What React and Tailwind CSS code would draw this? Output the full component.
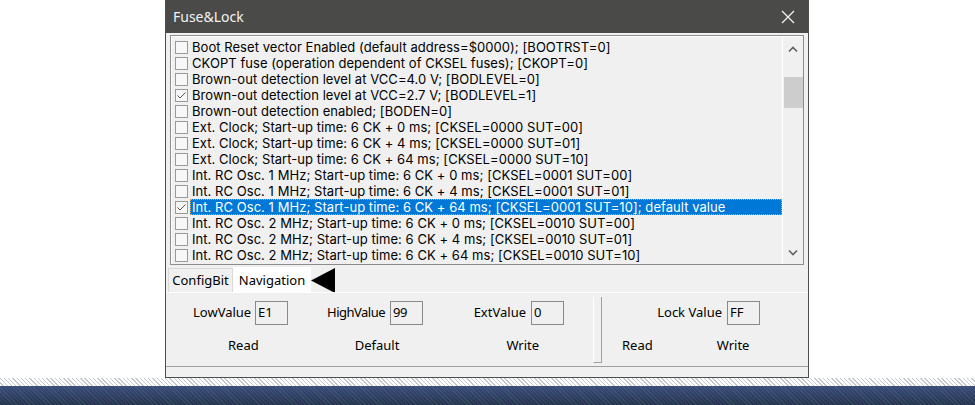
import React from "react"

const rows = [
 { t: "Boot Reset vector Enabled (default address=$0000); [BOOTRST=0]" },
 { t: "CKOPT fuse (operation dependent of CKSEL fuses); [CKOPT=0]" },
 { t: "Brown-out detection level at VCC=4.0 V; [BODLEVEL=0]" },
 { t: "Brown-out detection level at VCC=2.7 V; [BODLEVEL=1]", on: true },
 { t: "Brown-out detection enabled; [BODEN=0]" },
 { t: "Ext. Clock; Start-up time: 6 CK + 0 ms; [CKSEL=0000 SUT=00]" },
 { t: "Ext. Clock; Start-up time: 6 CK + 4 ms; [CKSEL=0000 SUT=01]" },
 { t: "Ext. Clock; Start-up time: 6 CK + 64 ms; [CKSEL=0000 SUT=10]" },
 { t: "Int. RC Osc. 1 MHz; Start-up time: 6 CK + 0 ms; [CKSEL=0001 SUT=00]" },
 { t: "Int. RC Osc. 1 MHz; Start-up time: 6 CK + 4 ms; [CKSEL=0001 SUT=01]" },
 { t: "Int. RC Osc. 1 MHz; Start-up time: 6 CK + 64 ms; [CKSEL=0001 SUT=10]; default value", on: true, sel: true },
 { t: "Int. RC Osc. 2 MHz; Start-up time: 6 CK + 0 ms; [CKSEL=0010 SUT=00]" },
 { t: "Int. RC Osc. 2 MHz; Start-up time: 6 CK + 4 ms; [CKSEL=0010 SUT=01]" },
 { t: "Int. RC Osc. 2 MHz; Start-up time: 6 CK + 64 ms; [CKSEL=0010 SUT=10]" },
]

function Check({ on }) {
 return (
  <div className="w-[13px] h-[13px] shrink-0 border border-[#9a9a9a] bg-[#f7f7f7] flex items-center justify-center">
   {on && (
    <svg width="11" height="11" viewBox="0 0 11 11">
     <polyline points="1.5,5.5 4,8 9.5,2.5" fill="none" stroke="#555" strokeWidth="1" />
    </svg>
   )}
  </div>
 )
}

function Field({ label, value, w }) {
 return (
  <div className="flex items-center">
   <span className={w + " text-right whitespace-nowrap"}>{label}</span>
   <div className="ml-[5px] w-[33px] h-[24px] border border-[#8a8a8a] bg-[#f0f0f0] pl-[2px] leading-[21px]">
    {value}
   </div>
  </div>
 )
}

export default function App() {
 return (
  <div className="w-[975px] h-[405px] bg-white flex flex-col overflow-hidden font-['Noto_Sans',sans-serif] text-[13px] text-black">

   {/* window */}
   <div className="h-[378px] pl-[165px] shrink-0">
    <div className="w-[644px] h-[378px] border-x border-b border-[#4e4e4e] bg-[#f0f0f0] flex flex-col">

     {/* TITLE BAR */}
     <div className="h-[33px] bg-[#4a4a48] flex items-center justify-between pl-[7px] pr-[13px] shrink-0">
      <span className="text-[14px] text-[#f2f2f2]">Fuse&amp;Lock</span>
      <svg width="14" height="14" viewBox="0 0 14 14">
       <path d="M1 1 L13 13 M13 1 L1 13" stroke="#f2f2f2" strokeWidth="1.3" />
      </svg>
     </div>

     {/* LIST */}
     <div className="mt-[2px] mx-[4px] h-[230px] border border-[#8c8c8c] shadow-[inset_1px_1px_0_#ffffff] bg-[#f0f0f0] flex shrink-0">
      <div className="flex-1 pt-[3px] pl-[4px] overflow-hidden font-['Inter',sans-serif] tracking-[0.05px]">
       {rows.map((r, i) => (
        <div key={i} className="h-[16px] flex items-center">
         <Check on={r.on} />
         <div
          className={
           r.sel
            ? "ml-[2px] h-[16px] flex-1 bg-[#0078d7] text-white pl-[2px] leading-[16px] whitespace-nowrap outline outline-1 outline-dotted outline-[#e8a040] -outline-offset-1"
            : "ml-[2px] pl-[2px] leading-[16px] whitespace-nowrap"
          }
         >
          {r.t}
         </div>
        </div>
       ))}
      </div>

      {/* scrollbar */}
      <div className="w-[21px] border-l border-white flex flex-col items-center">
       <div className="h-[26px] flex items-center justify-center">
        <svg width="10" height="7" viewBox="0 0 10 7">
         <polyline points="1,5.5 5,1.5 9,5.5" fill="none" stroke="#606060" strokeWidth="1.6" />
        </svg>
       </div>
       <div className="mt-[15px] w-[19px] h-[31px] bg-[#cdcdcd]" />
       <div className="flex-1" />
       <div className="h-[24px] flex items-center justify-center">
        <svg width="10" height="7" viewBox="0 0 10 7">
         <polyline points="1,1.5 5,5.5 9,1.5" fill="none" stroke="#606060" strokeWidth="1.6" />
        </svg>
       </div>
      </div>
     </div>

     {/* TABS */}
     <div className="h-[27px] flex items-end pl-[2px] shrink-0">
      <div className="h-[24px] w-[65px] border border-b-0 border-[#d9d9d9] bg-[#f0f0f0] flex items-center justify-center">
       ConfigBit
      </div>
      <div className="h-[25px] w-[78px] bg-white flex items-center justify-center pt-[2px]">
       Navigation
      </div>
      <svg width="25" height="25" viewBox="0 0 25 25" className="self-end mb-[-1px]">
       <polygon points="0,12.5 24,0 24,25" fill="#000" />
      </svg>
     </div>

     {/* PANEL */}
     <div className="flex-1 flex flex-col border-t border-white">
      <div className="flex-1 flex">

       {/* fuses */}
       <div className="w-[427px] flex flex-col pt-[8px]">
        <div className="flex items-center pl-[27px]">
         <Field label="LowValue" value="E1" w="w-[57px]" />
         <div className="ml-[39px] tracking-[-0.5px]"><Field label="HighValue" value="99" w="w-[58px]" /></div>
         <div className="ml-[50px]"><Field label="ExtValue" value="0" w="w-[53px]" /></div>
        </div>
        <div className="flex items-center h-[24px] mt-[9px]">
         <span className="ml-[62px]">Read</span>
         <span className="ml-[96px]">Default</span>
         <span className="ml-[107px]">Write</span>
        </div>
       </div>

       {/* splitter */}
       <div className="mt-[4px] mb-[3px] w-[9px] border-l border-white border-r border-b border-r-[#a0a0a0] border-b-[#a0a0a0]" />

       {/* lock */}
       <div className="flex-1 flex flex-col pt-[8px]">
        <div className="flex items-center pl-[54px]">
         <Field label="Lock Value" value="FF" w="w-[66px]" />
        </div>
        <div className="flex items-center h-[24px] mt-[9px]">
         <span className="ml-[20px]">Read</span>
         <span className="ml-[64px]">Write</span>
        </div>
       </div>
      </div>

      {/* status */}
      <div className="h-[11px] border-t border-[#a0a0a0]" />
     </div>
    </div>
   </div>

   {/* desktop edge */}
   <div className="h-[8px] shrink-0 bg-[image:repeating-linear-gradient(45deg,#ffffff_0px,#ffffff_2px,#c4c8d0_2px,#c4c8d0_3px)]" />
   <div className="flex-1 bg-[image:repeating-linear-gradient(45deg,rgba(70,140,110,0.25)_0px,rgba(70,140,110,0.25)_1px,transparent_1px,transparent_3px),linear-gradient(#3d4b7e,#27324f)]" />
  </div>
 )
}
